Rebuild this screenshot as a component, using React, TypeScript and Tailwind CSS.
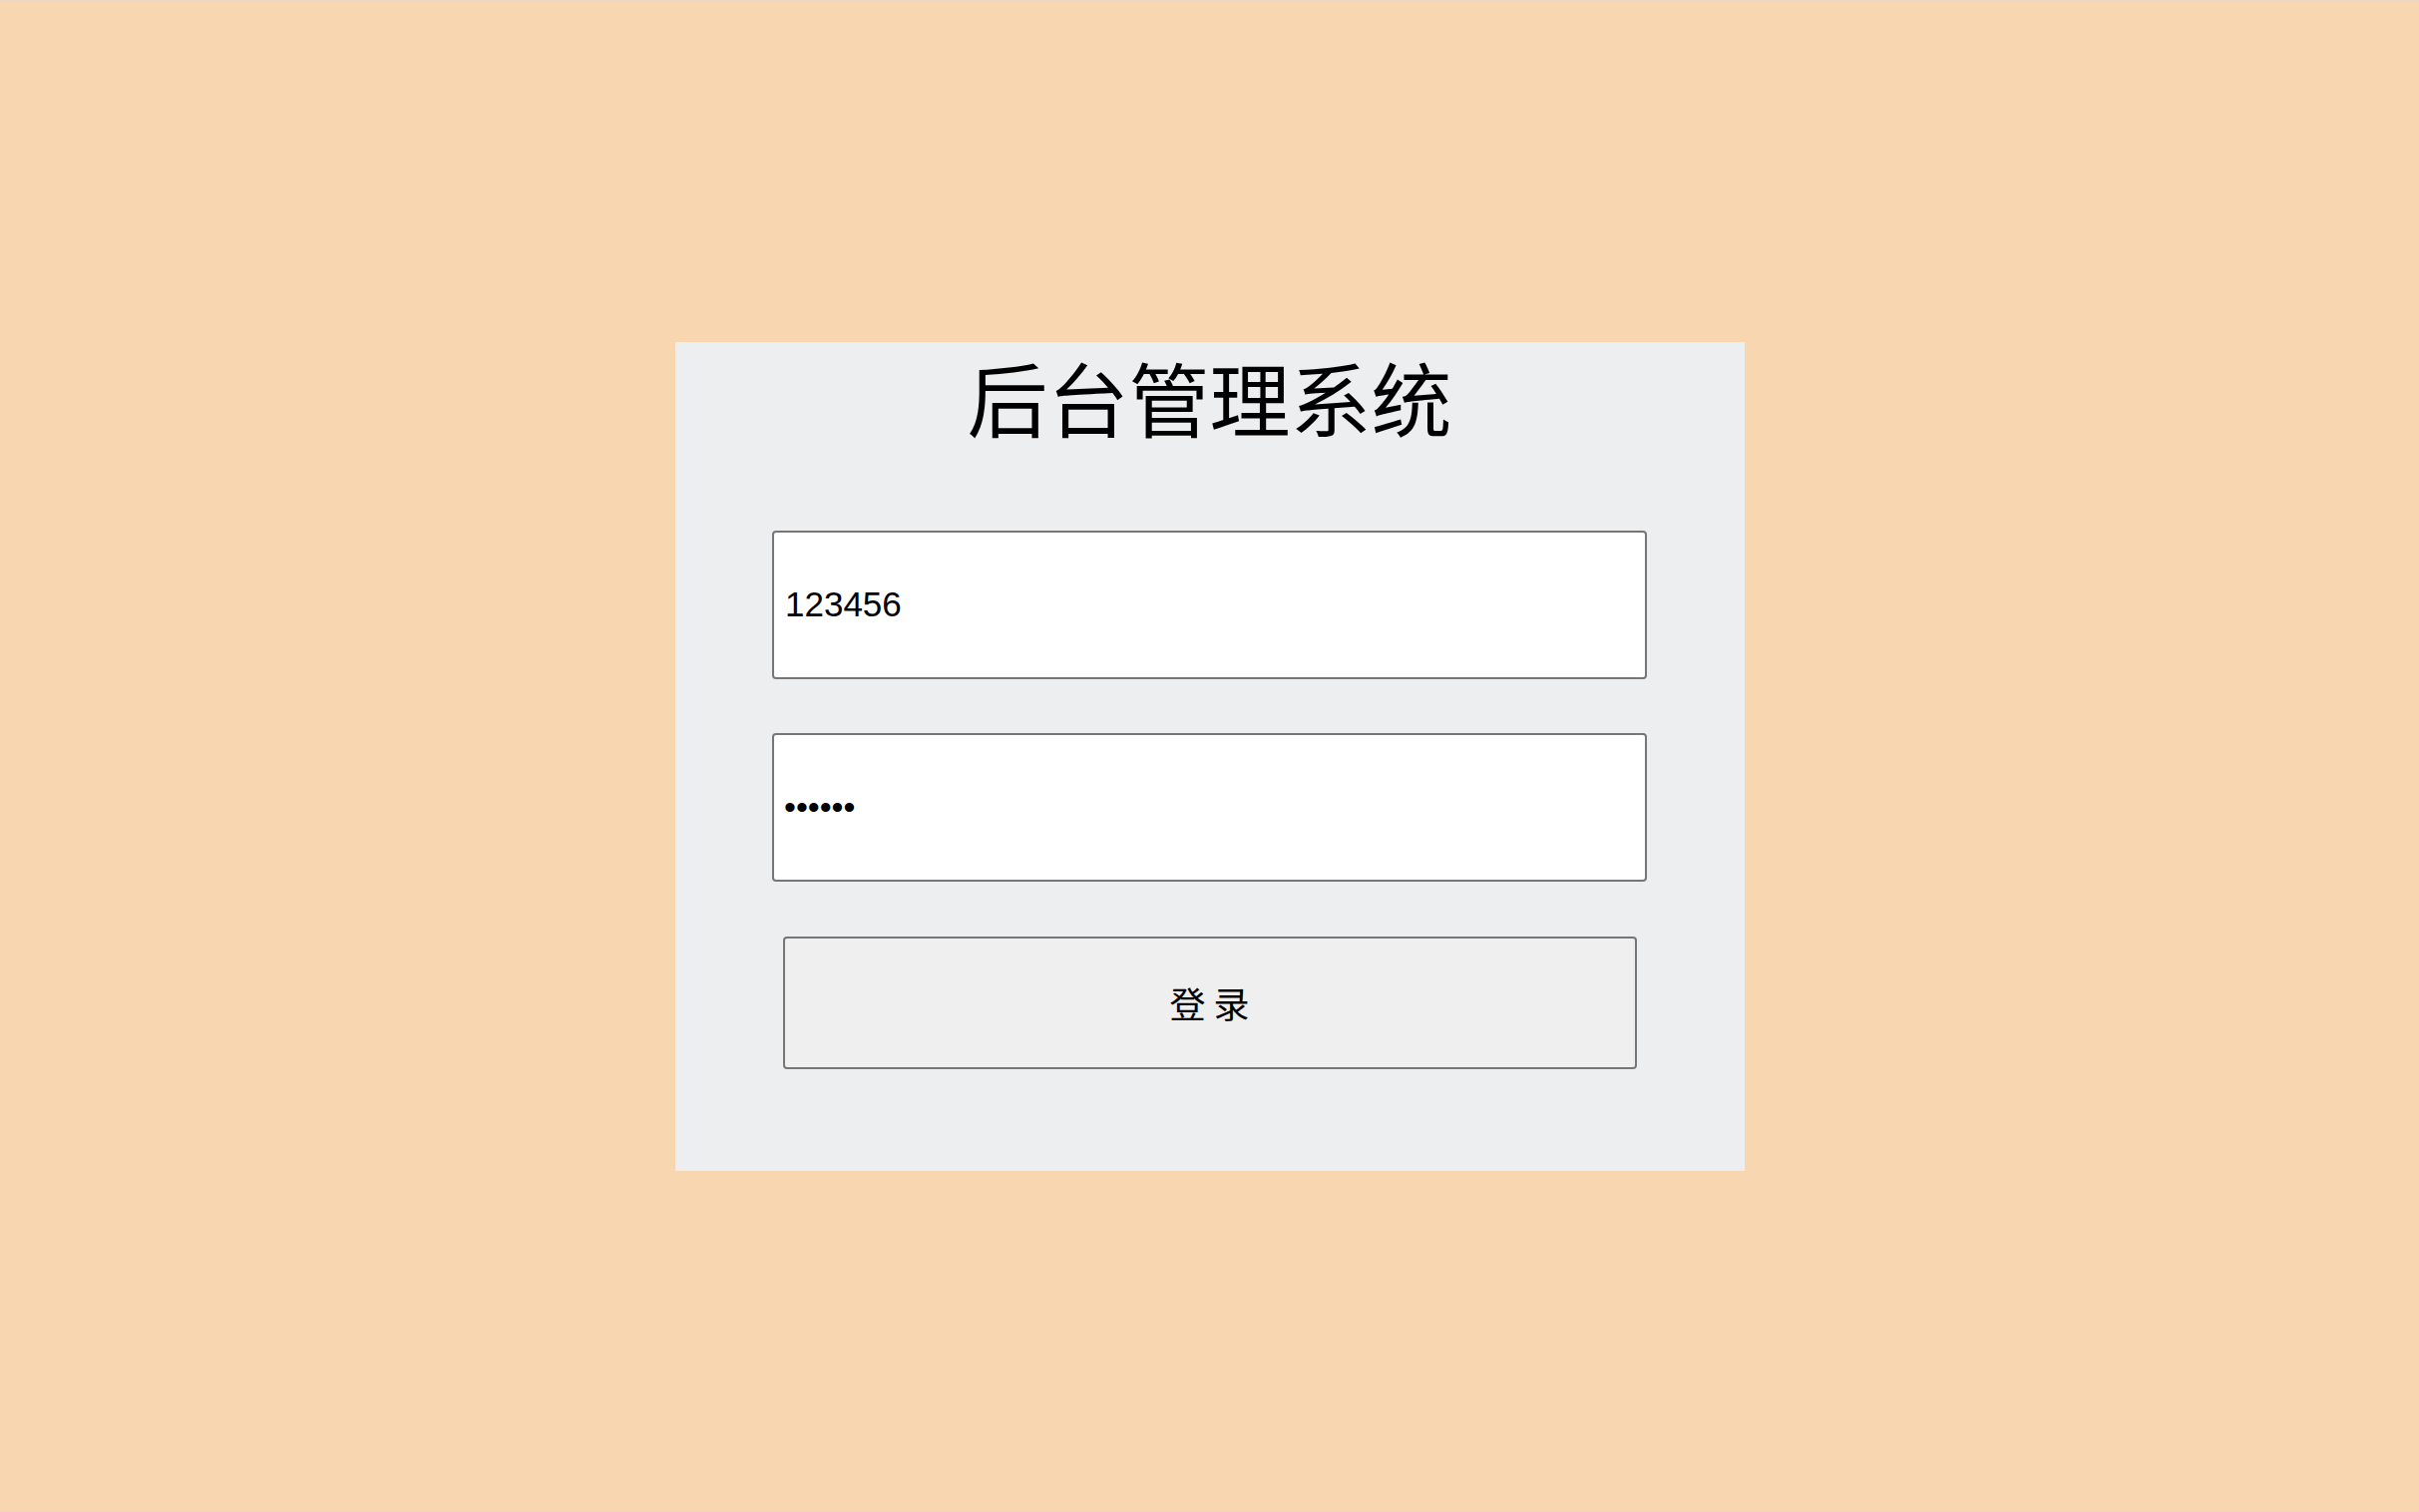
import React from "react";

export default function App() {
  return (
    <div className="w-full h-[1516px] bg-[#f7d6b0] flex items-center justify-center border-t border-b border-t-[#e9d6c3] border-b-[#e9d6c3]">
      <div className="w-[1072px] h-[831px] bg-[#edeef0] flex flex-col items-center">
        <h1 className="h-[108px] flex items-center text-[81px] leading-none text-black font-normal font-['Noto_Sans_CJK_SC','Noto_Sans',sans-serif]">
          后台管理系统
        </h1>
        <input
          type="text"
          readOnly
          value="123456"
          className="mt-[81px] w-[877px] h-[149px] bg-white border-2 border-[#767676] rounded-[4px] px-[11px] text-[35px] text-black outline-none font-['Liberation_Sans',Arial,sans-serif]"
        />
        <input
          type="password"
          readOnly
          value="123456"
          className="mt-[54px] w-[877px] h-[149px] bg-white border-2 border-[#767676] rounded-[4px] px-[10px] text-[34px] text-black outline-none font-['Liberation_Sans',Arial,sans-serif]"
        />
        <button
          type="button"
          className="mt-[55px] w-[856px] h-[133px] bg-[#efefef] border-2 border-[#767676] rounded-[4px] text-[36px] text-black flex items-center justify-center font-['Noto_Sans_CJK_SC','Noto_Sans',sans-serif]"
        >
          登 录
        </button>
      </div>
    </div>
  );
}
